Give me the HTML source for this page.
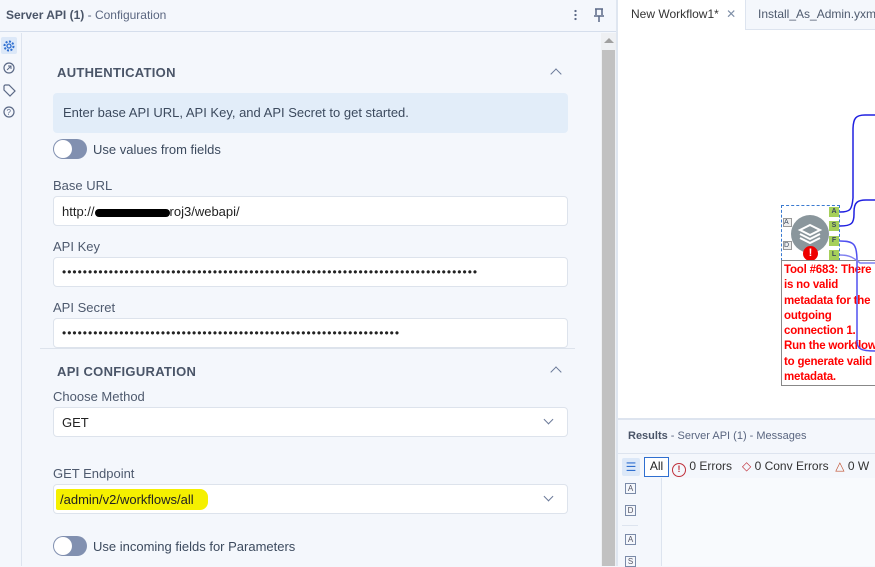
<!DOCTYPE html>
<html><head><style>
*{box-sizing:border-box;margin:0;padding:0}
body{width:875px;height:566px;overflow:hidden;background:#f4f7fc;font-family:"Liberation Sans",sans-serif;position:relative;color:#3c4a5e}
.a{position:absolute}
.lbl{position:absolute;left:53px;font-size:13px;color:#4e5a6e}
.inp{position:absolute;left:53px;width:515px;height:30px;background:#fff;border:1px solid #dde3ec;border-radius:4px;font-size:13px;color:#222;padding:7px 8px;white-space:nowrap;overflow:hidden}
.dots{font-size:12px;letter-spacing:1px;padding-top:7px}
.sec{position:absolute;left:57px;font-size:13px;font-weight:bold;color:#4a5568;letter-spacing:.3px}
.tog{position:absolute;left:53px;width:34px;height:20px;border-radius:10px;background:#8190b0}
.tog:after{content:"";position:absolute;left:1px;top:1px;width:18px;height:18px;border-radius:50%;background:#fff}
.chev{position:absolute;width:8px;height:8px;border-left:1.5px solid #6b7a99;border-top:1.5px solid #6b7a99}
</style></head><body>
<div class="a" style="left:0;top:0;width:617px;height:32px;border-bottom:1px solid #d5deec"></div>
<div class="a" style="left:6px;top:8px;font-size:12px;color:#3c4a5e"><b style="font-weight:bold;color:#4a5568">Server API (1)</b> <span style="color:#5a6680">- Configuration</span></div>
<div class="a" style="left:574px;top:9px;width:3px;height:12px;background:radial-gradient(circle,#5b6986 1px,transparent 1.3px) 0 0/3px 4px"></div>
<svg class="a" style="left:592px;top:7px" width="14" height="16"><path d="M3 2h8M4 2v6M10 2v6M2 9h10M7 9v6" stroke="#5b6986" stroke-width="1.5" fill="none"/></svg>
<div class="a" style="left:21px;top:33px;width:1px;height:533px;background:#dde4ef"></div>
<div class="a" style="left:1px;top:37px;width:16px;height:17px;background:#dce8f8;border-radius:2px"></div>
<svg class="a" style="left:2px;top:39px" width="14" height="14"><circle cx="7" cy="7" r="4.5" fill="none" stroke="#2f6fd0" stroke-width="2" stroke-dasharray="2 1.5"/><circle cx="7" cy="7" r="2" fill="none" stroke="#2f6fd0" stroke-width="1.3"/></svg>
<svg class="a" style="left:2px;top:61px" width="14" height="14"><circle cx="7" cy="7" r="5" fill="none" stroke="#5b6986" stroke-width="1.2"/><path d="M5 9l4-4M6 5h3v3" stroke="#5b6986" fill="none"/></svg>
<svg class="a" style="left:2px;top:83px" width="14" height="14"><path d="M2 3v4l6 6 5-5-6-6H3z" fill="none" stroke="#5b6986" stroke-width="1.2"/></svg>
<svg class="a" style="left:2px;top:105px" width="14" height="14"><circle cx="7" cy="7" r="5" fill="none" stroke="#5b6986" stroke-width="1.2"/><text x="4.5" y="10" font-size="8" fill="#5b6986" font-family="Liberation Sans">?</text></svg>
<div class="a" style="left:601px;top:33px;width:16px;height:533px;background:#eef0f3"></div>
<div class="a" style="left:602px;top:50px;width:13px;height:516px;background:#c1c1c1"></div>
<div class="a" style="left:604px;top:38px;width:0;height:0;border-left:5px solid transparent;border-right:5px solid transparent;border-bottom:5px solid #a0a0a0"></div>
<div class="a" style="left:616px;top:0;width:2px;height:566px;background:#dfe6f0"></div>
<div class="sec" style="top:65px">AUTHENTICATION</div>
<div class="chev" style="left:552px;top:70px;transform:rotate(45deg)"></div>
<div class="a" style="left:53px;top:93px;width:515px;height:40px;background:#e2edf9;border-radius:4px;font-size:13px;color:#3c4a5e;padding:12px 10px">Enter base API URL, API Key, and API Secret to get started.</div>
<div class="tog" style="top:139px"></div>
<div class="lbl" style="left:93px;top:142px;color:#3c4a5e">Use values from fields</div>
<div class="lbl" style="top:178px">Base URL</div>
<div class="inp" style="top:196px">http://<span style="display:inline-block;width:75px;height:8px;background:#000;border-radius:4px;vertical-align:middle"></span>roj3/webapi/</div>
<div class="lbl" style="top:239px">API Key</div>
<div class="inp dots" style="top:257px">••••••••••••••••••••••••••••••••••••••••••••••••••••••••••••••••••••••••••••••••</div>
<div class="lbl" style="top:300px">API Secret</div>
<div class="inp dots" style="top:318px">•••••••••••••••••••••••••••••••••••••••••••••••••••••••••••••••••</div>
<div class="a" style="left:40px;top:348px;width:535px;height:1px;background:#dde3ec"></div>
<div class="sec" style="top:364px">API CONFIGURATION</div>
<div class="chev" style="left:552px;top:368px;transform:rotate(45deg)"></div>
<div class="lbl" style="top:389px">Choose Method</div>
<div class="inp" style="top:407px">GET</div>
<div class="chev" style="left:545px;top:416px;width:7px;height:7px;transform:rotate(-135deg)"></div>
<div class="lbl" style="top:466px">GET Endpoint</div>
<div class="inp" style="top:484px"><span style="background:#f5f000;padding:3px 14px 3px 4px;margin-left:-6px;border-radius:2px 8px 8px 2px">/admin/v2/workflows/all</span></div>
<div class="chev" style="left:545px;top:493px;width:7px;height:7px;transform:rotate(-135deg)"></div>
<div class="tog" style="top:536px"></div>
<div class="lbl" style="left:93px;top:539px;color:#3c4a5e">Use incoming fields for Parameters</div>
<div class="a" style="left:618px;top:30px;width:257px;height:388px;background:#fff"></div>
<div class="a" style="left:618px;top:0;width:127px;height:30px;background:#fff"></div>
<div class="a" style="left:745px;top:0;width:130px;height:30px;background:#f4f7fc;border-bottom:1px solid #dde4ef;border-left:1px solid #dde4ef"></div>
<div class="a" style="left:631px;top:7px;font-size:12px;color:#333">New Workflow1* <span style="color:#8090a8;margin-left:4px">✕</span></div>
<div class="a" style="left:758px;top:7px;font-size:12px;color:#4e5a6e;white-space:nowrap">Install_As_Admin.yxmd*</div>
<div class="a" style="left:781px;top:205px;width:59px;height:56px;border:1px dashed #3a7ad0"></div>
<div class="a" style="left:791px;top:215px;width:38px;height:38px;border-radius:50%;background:#8a969c"></div>
<svg class="a" style="left:797px;top:222px" width="26" height="24"><g fill="none" stroke="#fff" stroke-width="2"><path d="M13 3l10 5-10 5-10-5z"/><path d="M3 12l10 5 10-5M3 16l10 5 10-5"/></g></svg>
<div class="a" style="left:803px;top:246px;width:15px;height:15px;border-radius:50%;background:#e00;color:#fff;font-size:11px;font-weight:bold;text-align:center;line-height:15px">!</div>
<div class="a" style="left:783px;top:218px;width:9px;height:9px;border:1px solid #999;font-size:7px;line-height:8px;background:#eee">A</div>
<div class="a" style="left:783px;top:241px;width:9px;height:9px;border:1px solid #999;font-size:7px;line-height:8px;background:#eee">D</div>
<div class="a" style="left:829px;top:207px;width:10px;height:10px;background:#a6d05a;font-size:7px;font-weight:bold;text-align:center;line-height:10px">A</div>
<div class="a" style="left:829px;top:221px;width:10px;height:10px;background:#a6d05a;font-size:7px;font-weight:bold;text-align:center;line-height:10px">S</div>
<div class="a" style="left:829px;top:236px;width:10px;height:10px;background:#a6d05a;font-size:7px;font-weight:bold;text-align:center;line-height:10px">F</div>
<div class="a" style="left:829px;top:250px;width:10px;height:10px;background:#a6d05a;font-size:7px;font-weight:bold;text-align:center;line-height:10px">L</div>
<div class="a" style="left:781px;top:260px;width:100px;height:126px;border:1px solid #888;padding:2px 2px;font-size:11.5px;letter-spacing:-0.2px;font-weight:bold;color:#f00;line-height:15.3px;white-space:nowrap">Tool #683: There<br>is no valid<br>metadata for the<br>outgoing<br>connection 1.<br>Run the workflow<br>to generate valid<br>metadata.</div>
<svg class="a" style="left:770px;top:100px" width="105" height="300">
<g fill="none" stroke="#2020e0" stroke-width="1.5">
<path d="M70 112c10 0 12-2 13-14V30c0-12 3-15 12-15h10"/>
<path d="M70 126c12 0 14-3 14-12V112c0-10 4-12 12-12h9"/>
<path d="M70 141c14 0 17 3 17 20v80c0 8 4 10 18 10" stroke="#5050f0"/>
<path d="M70 155c10 0 14 3 20 8h15" stroke="#8080f0"/>
</g></svg>
<div class="a" style="left:618px;top:418px;width:257px;height:148px;background:#f4f7fc;border-top:2px solid #dde4ef"></div>
<div class="a" style="left:628px;top:430px;font-size:11px;color:#5a6680"><b style="color:#4a5568">Results</b> - Server API (1) - Messages</div>
<div class="a" style="left:618px;top:453px;width:257px;height:1px;background:#dde4ef"></div>
<div class="a" style="left:661px;top:478px;width:214px;height:88px;background:#f8fafd;border-left:1px solid #dde4ef"></div>
<div class="a" style="left:622px;top:458px;width:18px;height:18px;background:#dce8f8;border-radius:2px;color:#2f6fd0;font-size:12px;text-align:center;line-height:18px">☰</div>
<div class="a" style="left:625px;top:483px;width:11px;height:11px;border:1px solid #7a8aa8;font-size:8px;line-height:9px;text-align:center;color:#556">A</div>
<div class="a" style="left:625px;top:505px;width:11px;height:11px;border:1px solid #7a8aa8;font-size:8px;line-height:9px;text-align:center;color:#556">D</div>
<div class="a" style="left:622px;top:525px;width:16px;height:1px;background:#dde4ef"></div>
<div class="a" style="left:625px;top:534px;width:11px;height:11px;border:1px solid #7a8aa8;font-size:8px;line-height:9px;text-align:center;color:#556">A</div>
<div class="a" style="left:625px;top:556px;width:11px;height:11px;border:1px solid #7a8aa8;font-size:8px;line-height:9px;text-align:center;color:#556">S</div>
<div class="a" style="left:644px;top:457px;width:25px;height:20px;border:1.5px solid #2f6fd0;background:#fff;font-size:12px;text-align:center;line-height:17px;color:#222">All</div>
<div class="a" style="left:672px;top:459px;font-size:12px;color:#333;white-space:nowrap"><span style="display:inline-block;width:14px;height:14px;border:1.5px solid #c0303a;border-radius:50%;font-size:9px;color:#c0303a;text-align:center;line-height:11px;font-weight:bold;vertical-align:-2px">!</span> 0 Errors &nbsp;&nbsp;<span style="color:#c0303a">◇</span> 0 Conv Errors &nbsp;<span style="color:#c05030">△</span> 0 W</div>
</body></html>
